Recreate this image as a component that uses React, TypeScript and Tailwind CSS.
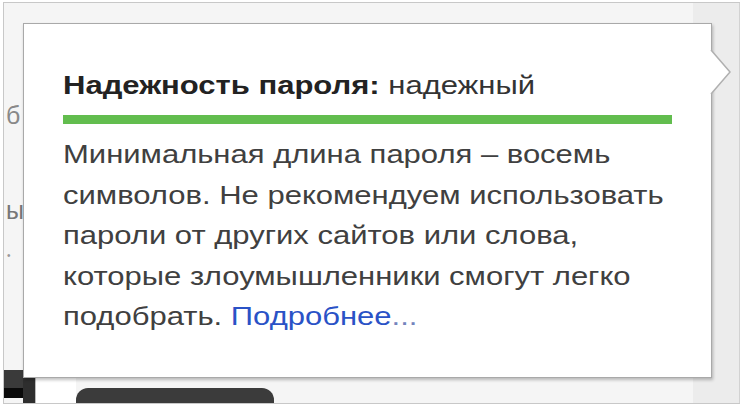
import React from "react";

function Arrow() {
  return (
    <svg
      className="absolute left-[686px] top-[44px]"
      width="48"
      height="56"
      viewBox="0 0 48 56"
    >
      <path d="M25 0 L25 6 L44 28 L25 50 L25 56" fill="#ffffff" stroke="none" />
      <path d="M25 6 L44 28 L25 50" fill="none" stroke="#b0b0b0" strokeWidth="1.5" />
    </svg>
  );
}

function StrengthBubble() {
  return (
    <div className="absolute left-[23px] top-[23px] w-[689px] h-[355px] bg-white border border-[#a9a9a9] shadow-[1px_2px_3px_rgba(0,0,0,0.25)] px-[39px] pt-[47px]">
      <div className="origin-left scale-x-[1.24] text-[25px] leading-[28px] text-[#222] whitespace-nowrap">
        <span className="font-bold">Надежность пароля:</span>{" "}
        <span className="text-[#333]">надежный</span>
      </div>
      <div className="mt-[16px] h-[9px] bg-[#62bd4e]" />
      <p className="mt-[10px] origin-left scale-x-[1.24] text-[25px] leading-[40.5px] text-[#404040] whitespace-nowrap">
        Минимальная длина пароля – восемь
        <br />
        символов. Не рекомендуем использовать
        <br />
        пароли от других сайтов или слова,
        <br />
        которые злоумышленники смогут легко
        <br />
        подобрать. <span className="text-[#2a52c6]">Подробнее</span>
        <span className="text-[#7484bd]">...</span>
      </p>
    </div>
  );
}

export default function App() {
  return (
    <div
      className="relative w-[740px] h-[408px] overflow-hidden bg-white flex flex-col"
      style={{ fontFamily: '"Liberation Sans", Arial, sans-serif' }}
    >
      {/* page behind the bubble */}
      <div className="mt-[2px] ml-[3px] h-[402px] flex border-t border-l border-b border-[#c8c8c8] bg-[#f5f5f5]">
        <div className="flex-1 flex flex-col">
          <div className="flex-1 flex flex-col pl-[2px] pt-[100px] text-[#888]">
            <span className="text-[25px] leading-none">б</span>
            <span className="mt-[70px] text-[25px] leading-none text-[#777]">ы</span>
            <span className="mt-[28px] pl-[1px] text-[10px] leading-none text-[#999]">•</span>
          </div>
          <div className="h-[33px] flex items-end">
            <div className="w-[19px] h-[33px] flex flex-col">
              <div className="h-[18px] bg-[#3a3a3a]" />
              <div className="h-[10px] bg-[#0a0a0a]" />
            </div>
            <div className="w-[12px] h-[27px] bg-[#2e2e2e]" />
            <div className="w-[41px] h-[25px] bg-white border-l border-[#bbb]" />
            <div className="w-[198px] h-[15px] rounded-t-[12px] bg-[#3b3b3b]" />
          </div>
        </div>
        <div className="w-[47px] bg-[#ececec] border-r border-[#d2d2d2]" />
      </div>

      <StrengthBubble />
      <Arrow />
    </div>
  );
}
